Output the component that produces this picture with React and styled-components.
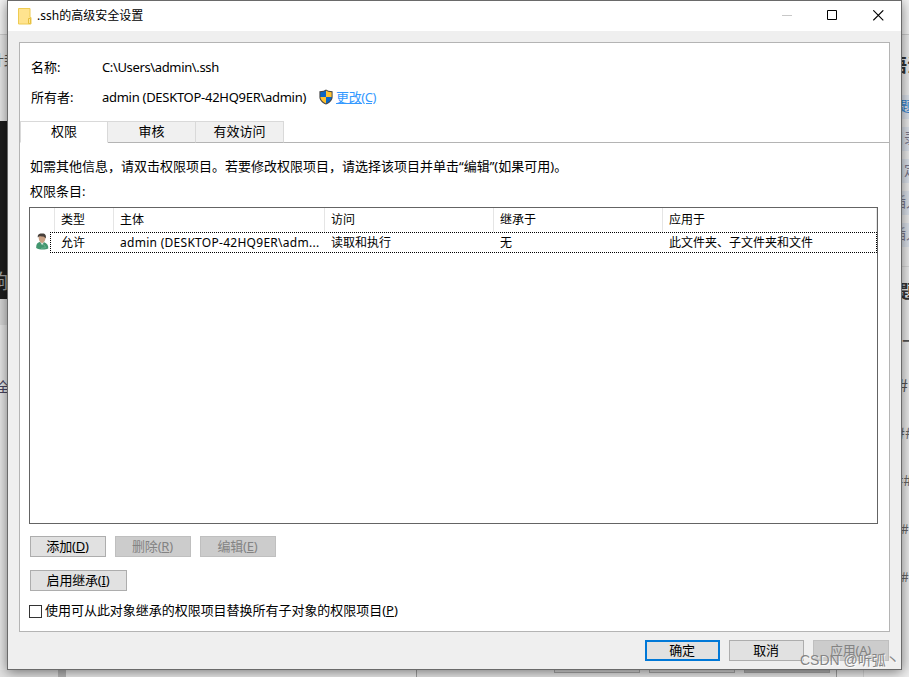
import styled, { createGlobalStyle } from 'styled-components';

const columns = [
    { key: 'type', label: '类型', value: '允许', width: '59px' },
    { key: 'principal', label: '主体', value: 'admin (DESKTOP-42HQ9ER\\adm...', width: '211px', spacing: '0.28px' },
    { key: 'access', label: '访问', value: '读取和执行', width: '169px' },
    { key: 'inherited', label: '继承于', value: '无', width: '169px' },
    { key: 'applies', label: '应用于', value: '此文件夹、子文件夹和文件', width: '214px' },
];

// what can be seen of the page on the left of the dialog
const leftSlices = [
    { height: 34, bg: '#f4f4f4' },
    { height: 1, bg: '#cfcfcf' },
    { height: 86, bg: '#e9e9e9', text: '计封', size: 14, shift: -10, top: 12, color: '#555' },
    { height: 178, bg: '#1e1e1e', text: '响', size: 20, shift: -12, top: 148, color: '#a5a5a5' },
    { height: 26, bg: '#d9d9d9' },
    { height: 345, bg: '#e9e9e9', text: '全', size: 14, shift: -4, top: 49, color: '#4a4560' },
];

// and on the right of it
const rightSlices = [
    { height: 34, bg: '#f4f4f4' },
    { height: 1, bg: '#cfcfcf' },
    { height: 60, bg: '#ececec', text: '语法', size: 18, shift: -13, top: 17, color: '#333', bold: true },
    { height: 24, bg: '#dbe1ea', text: '题', size: 14, shift: -2, top: -2, color: '#2b7fd0' },
    { height: 8, bg: '#ececec' },
    { height: 24, bg: '#dbe1ea', text: '目录', size: 14, shift: -12, top: -2, color: '#77778c' },
    { height: 8, bg: '#ececec' },
    { height: 24, bg: '#dbe1ea', text: '目定', size: 14, shift: -12, top: -2, color: '#77778c' },
    { height: 8, bg: '#ececec' },
    { height: 24, bg: '#dbe1ea', text: '插入', size: 14, shift: -10, top: -2, color: '#77778c' },
    { height: 8, bg: '#ececec' },
    { height: 24, bg: '#dbe1ea', text: '插入', size: 14, shift: -10, top: -2, color: '#77778c' },
    { height: 19, bg: '#ececec' },
    { height: 1, bg: '#d8d8d8' },
    { height: 47, bg: '#ececec', text: '题', size: 18, shift: -3, top: 11, color: '#333', bold: true },
    { height: 48, bg: '#ececec', text: '—', size: 18, shift: 0, top: 12, color: '#555', bold: true },
    { height: 48, bg: '#ececec', text: '#', size: 18, shift: -4, top: 10, color: '#555' },
    { height: 48, bg: '#ececec', text: '##', size: 16, shift: -6, top: 10, color: '#666' },
    { height: 48, bg: '#ececec', text: '##', size: 15, shift: -7, top: 10, color: '#666' },
    { height: 48, bg: '#ececec', text: '#', size: 14, shift: -1, top: 10, color: '#666' },
    { height: 116, bg: '#ececec', text: '#', size: 14, shift: -1, top: 10, color: '#666' },
];

const FolderIcon = () => (
    <svg width="14" height="17" viewBox="0 0 14 17">
        <path d="M0.5 0.5h11.5v9h1v6.5H0.5z" fill="#ffe38e" stroke="#eecb52" />
        <path d="M10.5 15.5v-5h2v5z" fill="#ffe794" stroke="#e6bf3f" />
    </svg>
);

const ShieldIcon = () => (
    <svg width="14" height="16" viewBox="0 0 14 16">
        <path d="M7 0.4 L9.4 1.8 L13.6 2.3 V8.2 C13.4 11.6 10.8 13.8 7 15.6 C3.2 13.8 0.6 11.6 0.4 8.2 V2.3 L4.6 1.8Z" fill="#484848" />
        <path d="M7 1.5 V8 H1.4 V3.2 L4.8 2.7Z" fill="#0a66c6" />
        <path d="M7 1.5 L9.2 2.7 L12.6 3.2 V8 H7Z" fill="#ffc22f" />
        <path d="M1.4 8 H7 V14.5 C3.8 12.9 1.6 11 1.4 8Z" fill="#ffc22f" />
        <path d="M7 8 H12.6 C12.4 11 10.2 12.9 7 14.5Z" fill="#0a66c6" />
    </svg>
);

const UserIcon = () => (
    <svg width="13" height="17" viewBox="0 0 13 17">
        <path d="M0.2 15 C0 11.4 1 9.6 3.6 8.9 L8.2 9.2 C11.4 10.6 12.6 13 12.2 15.6 C9 17.2 3 16.8 0.2 15Z" fill="#43966f" />
        <path d="M3.9 8.6 L6.1 12.2 L8 9.2Z" fill="#d9e4dd" />
        <path d="M2.6 3 C2.8 1.4 9.4 1.4 9.4 4 C9.6 7 8.4 9.8 6.2 9.9 C3.9 9.8 2.5 7 2.6 3Z" fill="#c9a184" />
        <path d="M1.9 4.6 C1 1 4 0.2 6.2 0.5 C9.2 0.4 10.6 2.4 9.7 5.6 C9 3.8 7.4 3.3 5.6 3.4 C3.6 3.2 2.6 3.6 1.9 4.6Z" fill="#47403b" />
        <path d="M7.4 11.2 L9.8 14.6 L5 15.4" fill="none" stroke="#6fb695" strokeWidth="0.8" />
    </svg>
);

const Strip = ({ slices }) => (
    <StripColumn>
        {slices.map((slice, index) => (
            <Slice key={index} $height={slice.height} $bg={slice.bg}>
                {slice.text && (
                    <SliceText
                        $size={slice.size}
                        $shift={slice.shift}
                        $top={slice.top}
                        $color={slice.color}
                        $bold={slice.bold}
                    >
                        {slice.text}
                    </SliceText>
                )}
            </Slice>
        ))}
    </StripColumn>
);

const App = () => {
    return (
        <Desktop>
            <GlobalStyle />
            <Strip slices={leftSlices} />
            <Dialog>
                <TitleBar>
                    <FolderIcon />
                    <h1>.ssh的高级安全设置</h1>
                    <WindowControls>
                        <svg width="11" height="11" viewBox="0 0 11 11">
                            <path d="M1 5.5h10" stroke="#c8c8c8" />
                        </svg>
                        <svg width="11" height="11" viewBox="0 0 11 11">
                            <path d="M0.5 0.5h9v9h-9z" fill="none" stroke="#000" />
                        </svg>
                        <svg width="11" height="11" viewBox="0 0 11 11">
                            <path d="M0.3 0.3l10 10M10.3 0.3l-10 10" stroke="#000" strokeWidth="1.1" />
                        </svg>
                    </WindowControls>
                </TitleBar>
                <Panel>
                    <Info>
                        <InfoRow>
                            <dt>名称:</dt>
                            <dd>
                                <Latin $spacing="-0.36px">C:\Users\admin\.ssh</Latin>
                            </dd>
                        </InfoRow>
                        <InfoRow>
                            <dt>所有者:</dt>
                            <dd>
                                <Latin $spacing="-0.28px">admin (DESKTOP-42HQ9ER\admin)</Latin>
                                <ShieldIcon />
                                <ChangeLink href="#">更改(C)</ChangeLink>
                            </dd>
                        </InfoRow>
                    </Info>
                    <Tabs>
                        <Tab $active $width="88px">权限</Tab>
                        <Tab $width="88px">审核</Tab>
                        <Tab $width="88px">有效访问</Tab>
                        <TabLine />
                    </Tabs>
                    <Content>
                        <Hint>如需其他信息，请双击权限项目。若要修改权限项目，请选择该项目并单击“编辑”(如果可用)。</Hint>
                        <ListLabel>权限条目:</ListLabel>
                        <Table>
                            <TableHeader>
                                <HeaderGap />
                                {columns.map((column) => (
                                    <HeaderCell key={column.key} $width={column.width}>
                                        {column.label}
                                    </HeaderCell>
                                ))}
                            </TableHeader>
                            <TableRow>
                                <UserIcon />
                                <Focused>
                                    {columns.map((column) => (
                                        <Cell key={column.key} $width={column.width} $spacing={column.spacing}>
                                            {column.value}
                                        </Cell>
                                    ))}
                                </Focused>
                            </TableRow>
                        </Table>
                        <Actions>
                            <Button>添加(<u>D</u>)</Button>
                            <Button disabled>删除(<u>R</u>)</Button>
                            <Button disabled>编辑(<u>E</u>)</Button>
                        </Actions>
                        <Actions $top="13px">
                            <Button $width="97px">启用继承(<u>I</u>)</Button>
                        </Actions>
                        <CheckLabel>
                            <input type="checkbox" />
                            <span>使用可从此对象继承的权限项目替换所有子对象的权限项目(<u>P</u>)</span>
                        </CheckLabel>
                    </Content>
                </Panel>
                <Footer>
                    <Button $width="75px" $primary>确定</Button>
                    <Button $width="75px">取消</Button>
                    <Button disabled>应用(A)</Button>
                </Footer>
            </Dialog>
            <Strip slices={rightSlices} />
            <BottomStrip>
                <BottomPart $width="58px" $bg="#e2e2e2" />
                <BottomPart $width="8px" $bg="#b8b8b8" />
                <BottomPart $width="350px" $bg="#ededed" />
                <BehindWindow>
                    <BehindButton $width="86px" />
                    <BehindButton $width="86px" />
                    <BehindButton $width="86px" $dark />
                </BehindWindow>
                <BottomPart $width="26px" $bg="#ededed" />
                <BottomPart $width="1px" $bg="#d8d8d8" />
                <BottomPart $width="45px" $bg="#efefef" />
            </BottomStrip>
            <Watermark>CSDN @听弧丶</Watermark>
        </Desktop>
    );
};

const GlobalStyle = createGlobalStyle`
    * {
        box-sizing: border-box;
    }

    body {
        margin: 0;
        overflow: hidden;
        font-family: 'Noto Sans', 'Noto Sans CJK SC', sans-serif;
        font-size: 13px;
        color: #000;
    }

    h1, p, dl, dd {
        margin: 0;
    }

    svg {
        display: block;
        flex: none;
    }
`;

const Desktop = styled.main`
    position: relative;
    width: 909px;
    height: 677px;
    display: grid;
    grid-template-columns: 7px 895px 7px;
    grid-template-rows: 670px 7px;
    overflow: hidden;
`;

const StripColumn = styled.aside`
    display: flex;
    flex-direction: column;
    overflow: hidden;
`;

const Slice = styled.div`
    flex: none;
    display: flow-root;
    height: ${({ $height }) => $height}px;
    background: ${({ $bg }) => $bg};
    overflow: hidden;
    white-space: nowrap;
`;

const SliceText = styled.span`
    display: block;
    margin: ${({ $top, $shift }) => `${$top}px 0 0 ${$shift}px`};
    font-family: 'Noto Sans CJK SC', sans-serif;
    font-size: ${({ $size }) => $size}px;
    line-height: 24px;
    font-weight: ${({ $bold }) => ($bold ? 700 : 400)};
    color: ${({ $color }) => $color};
`;

const Dialog = styled.section`
    position: relative;
    z-index: 1;
    display: flex;
    flex-direction: column;
    border: 1px solid #6a6a6a;
    background: #efefef;
    box-shadow: 0 2px 12px rgba(0, 0, 0, 0.5);
`;

const TitleBar = styled.header`
    flex: none;
    display: flex;
    align-items: center;
    height: 30px;
    padding: 0 17px 0 10px;
    background: #fff;

    h1 {
        margin-left: 5px;
        font-size: 12px;
        line-height: 18px;
        font-weight: 400;
    }
`;

const WindowControls = styled.div`
    display: flex;
    gap: 35px;
    margin-left: auto;
    margin-top: -1px;
`;

const Panel = styled.div`
    height: 590px;
    margin: 11px 11px 0;
    border: 1px solid #b4b4b4;
    background: #fff;
`;

const Info = styled.dl`
    height: 78px;
    padding: 9px 11px 0;
`;

const InfoRow = styled.div`
    display: flex;
    align-items: center;
    height: 30px;
    line-height: 20px;

    dt {
        width: 71px;
    }

    dd {
        display: flex;
        align-items: center;
    }

    svg {
        margin: -1px 3px 0 13px;
    }
`;

const Latin = styled.span`
    letter-spacing: ${({ $spacing }) => $spacing};
    white-space: nowrap;
`;

const ChangeLink = styled.a`
    color: #3399ff;
    letter-spacing: -0.4px;
    white-space: nowrap;
`;

const Tabs = styled.nav`
    display: flex;
    height: 22px;
`;

const Tab = styled.div`
    width: ${({ $width }) => $width};
    border: 1px solid #d9d9d9;
    border-left-width: ${({ $active }) => ($active ? '1px' : '0')};
    border-bottom-color: ${({ $active }) => ($active ? '#fff' : '#b4b4b4')};
    background: ${({ $active }) => ($active ? '#fff' : '#f0f0f0')};
    line-height: 18px;
    text-align: center;
`;

const TabLine = styled.div`
    flex: 1;
    border-bottom: 1px solid #b4b4b4;
`;

const Content = styled.div`
    padding: 13px 11px 0 9px;
`;

const Hint = styled.p`
    margin-left: 1px;
    line-height: 20px;
    white-space: nowrap;
`;

const ListLabel = styled.p`
    margin: 5px 0 0 1px;
    line-height: 20px;
`;

const Table = styled.div`
    height: 317px;
    margin-top: 6px;
    border: 1px solid #646464;
    font-size: 12px;
`;

const TableHeader = styled.div`
    display: flex;
    height: 24px;
`;

const HeaderGap = styled.div`
    width: 25px;
    border-right: 1px solid #e5e5e5;
`;

const HeaderCell = styled.div`
    width: ${({ $width }) => $width};
    padding-left: 6px;
    border-right: 1px solid #e5e5e5;
    line-height: 23px;
`;

const TableRow = styled.div`
    display: flex;
    height: 21px;
    padding-left: 6px;

    svg {
        margin-top: 1px;
    }
`;

const Focused = styled.div`
    flex: 1;
    display: flex;
    min-width: 0;
    margin-left: 1px;
    padding-left: 4px;
    border: 1px dotted #000;
`;

const Cell = styled.div`
    flex: none;
    width: ${({ $width }) => $width};
    padding-left: 6px;
    letter-spacing: ${({ $spacing }) => $spacing || '0'};
    line-height: 19px;
    white-space: nowrap;

    &:last-child {
        flex: 1;
        width: auto;
        min-width: 0;
    }
`;

const Actions = styled.div`
    display: flex;
    gap: 9px;
    margin: ${({ $top }) => $top || '12px'} 0 0 1px;
`;

const Button = styled.button`
    width: ${({ $width }) => $width || '76px'};
    height: 21px;
    padding: 0 1px 1px 0;
    border: ${({ $primary }) => ($primary ? '2px solid #0078d7' : '1px solid #adadad')};
    background: #e1e1e1;
    color: #000;
    font: inherit;
    line-height: 16px;
    letter-spacing: -0.2px;
    white-space: nowrap;

    &:disabled {
        border-color: #bfbfbf;
        background: #cccccc;
        color: #838383;
    }
`;

const CheckLabel = styled.label`
    display: flex;
    align-items: center;
    height: 20px;
    margin-top: 10px;
    white-space: nowrap;

    input {
        appearance: none;
        flex: none;
        width: 13px;
        height: 13px;
        margin: 0 3px 0 0;
        border: 1px solid #333;
        background: #fff;
    }

    span {
        margin-top: -3px;
        letter-spacing: -0.03px;
    }
`;

const Footer = styled.footer`
    display: flex;
    justify-content: flex-end;
    gap: 9px;
    padding: 8px 12px 0 0;
`;

const BottomStrip = styled.div`
    grid-column: 1 / -1;
    display: flex;
    height: 7px;
`;

const BottomPart = styled.div`
    flex: none;
    width: ${({ $width }) => $width};
    background: ${({ $bg }) => $bg};
`;

const BehindWindow = styled.div`
    display: flex;
    flex: 1;
    gap: 9px;
    padding-left: 137px;
    border: solid #a0a0a0;
    border-width: 0 1px;
    background: #e8e8e8;
`;

const BehindButton = styled.div`
    width: ${({ $width }) => $width};
    height: 3px;
    border: 1px solid #ababab;
    border-top: 0;
    background: ${({ $dark }) => ($dark ? '#b8b8b8' : '#dadada')};
`;

const Watermark = styled.div`
    position: absolute;
    z-index: 2;
    left: 800px;
    top: 650px;
    font-family: 'Liberation Sans', 'Noto Sans CJK SC', sans-serif;
    font-size: 14px;
    line-height: 20px;
    color: #858585;
    text-shadow: 1px 1px 0 rgba(255, 255, 255, 0.8);
    white-space: nowrap;
`;

export default App;
